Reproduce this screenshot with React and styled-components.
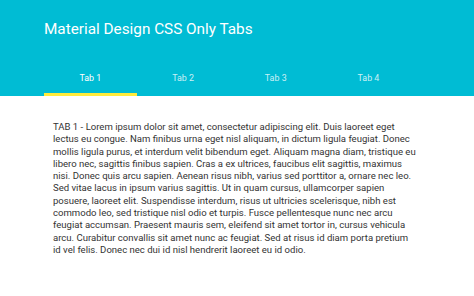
import React, { useState } from 'react';
import styled, { createGlobalStyle } from 'styled-components';

const GlobalStyle = createGlobalStyle`
  html, body {
    margin: 0;
    padding: 0;
    background: #fff;
    font-family: Roboto, "Liberation Sans", sans-serif;
  }
`;

const Header = styled.header`
  background: #00bcd4;
  padding: 0 44px;
  height: 96px;
  display: flex;
  flex-direction: column;
  justify-content: space-between;
  box-sizing: border-box;
`;

const Title = styled.h1`
  margin: 0;
  padding-top: 20px;
  color: #fff;
  font-size: 15.3px;
  font-weight: 400;
  line-height: 19px;
`;

const TabBar = styled.nav`
  display: flex;
`;

const Tab = styled.button`
  width: 92.7px;
  height: 32px;
  padding: 0;
  border: 0;
  border-bottom: 3px solid ${(p) => (p.$active ? '#ffeb3b' : 'transparent')};
  background: none;
  color: ${(p) => (p.$active ? '#fff' : 'rgba(255, 255, 255, 0.8)')};
  font-family: inherit;
  font-size: 8.9px;
  line-height: 1;
  cursor: pointer;
`;

const Panel = styled.section`
  width: 363px;
  padding: 25px 0 0 53px;
  color: #333;
  font-size: 9.55px;
  line-height: 12.3px;
`;

const tabs = ['Tab 1', 'Tab 2', 'Tab 3', 'Tab 4'];

const lorem =
  'Lorem ipsum dolor sit amet, consectetur adipiscing elit. Duis laoreet eget lectus eu congue. Nam finibus urna eget nisl aliquam, in dictum ligula feugiat. Donec mollis ligula purus, et interdum velit bibendum eget. Aliquam magna diam, tristique eu libero nec, sagittis finibus sapien. Cras a ex ultrices, faucibus elit sagittis, maximus nisi. Donec quis arcu sapien. Aenean risus nibh, varius sed porttitor a, ornare nec leo. Sed vitae lacus in ipsum varius sagittis. Ut in quam cursus, ullamcorper sapien posuere, laoreet elit. Suspendisse interdum, risus ut ultricies scelerisque, nibh est commodo leo, sed tristique nisl odio et turpis. Fusce pellentesque nunc nec arcu feugiat accumsan. Praesent mauris sem, eleifend sit amet tortor in, cursus vehicula arcu. Curabitur convallis sit amet nunc ac feugiat. Sed at risus id diam porta pretium id vel felis. Donec nec dui id nisl hendrerit laoreet eu id odio.';

export default function App() {
  const [active, setActive] = useState(0);
  return (
    <>
      <GlobalStyle />
      <Header>
        <Title>Material Design CSS Only Tabs</Title>
        <TabBar>
          {tabs.map((t, i) => (
            <Tab key={t} $active={i === active} onClick={() => setActive(i)}>
              {t}
            </Tab>
          ))}
        </TabBar>
      </Header>
      <Panel>
        {tabs[active].toUpperCase()} - {lorem}
      </Panel>
    </>
  );
}
